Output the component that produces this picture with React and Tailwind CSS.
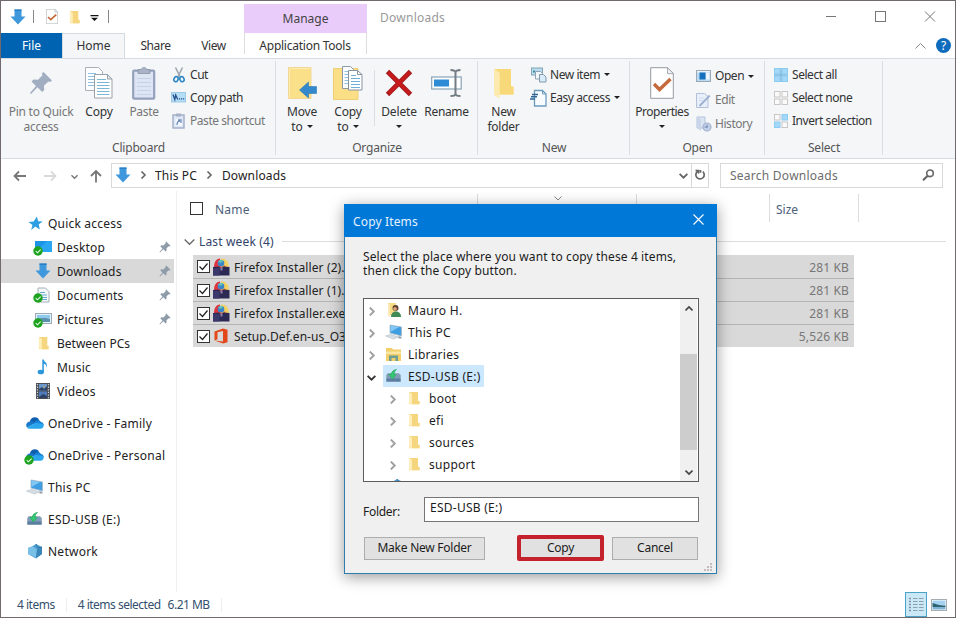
import clsx from "clsx";

/* ---------- ICONS ---------- */

const DownArrow = ({ size = 16 }) => (
  <svg width={size} height={size} viewBox="0 0 16 16">
    <path d="M4.500.500h7V7.500h4L8 15.500.5 7.500h4z" fill="#3f97dc" />
    <path d="M4.500.500h7V2h-7z" fill="#2b7fc7" />
  </svg>
);

const Folder = ({ w = 12, h = 16 }) => (
  <svg width={w} height={h} viewBox="0 0 12 16" preserveAspectRatio="none">
    <path d="M1 1h9v10l1.500 0v4H1z" fill="#fbe296" />
    <path d="M10 1v10.500h1.500V15H4V3.500L1.500 1z" fill="#f5d67e" />
    <path d="M1 1l3 2.500v12L1 13.500z" fill="#fdeebb" />
  </svg>
);

const Pin = ({ size = 13, color = "#8e9caa" }) => (
  <svg width={size} height={size} viewBox="0 0 24 24">
    <path d="M14.500 1l8.500 8.500-2 1.500-1.500-.5-4.500 4 .2 4.500-2 2-4.700-4.700L2 23l-1-1 6-7L2.500 10.500l2-2 4.500.3 4.500-4.600-.7-1.700z" fill={color} />
  </svg>
);

const Caret = () => (
  <svg width="6" height="3" viewBox="0 0 6 3" className="inline-block">
    <path d="M0 0h6L3 3z" fill="#222" />
  </svg>
);

const Chevron = ({ dir = "right", size = 8, color = "#666", stroke = 1.400 }) => {
  const paths = {
    right: "M2.500 0.500L6 4 2.500 7.500",
    down: "M0.500 2.500L4 6 7.500 2.500",
    up: "M0.500 5.500L4 2 7.500 5.500",
  };
  return (
    <svg width={size} height={size} viewBox="0 0 8 8" fill="none" stroke={color} strokeWidth={stroke}>
      <path d={paths[dir]} />
    </svg>
  );
};

const NavArrow = ({ dir, color }) => {
  const paths = {
    left: "M6 1.500L1.500 6 6 10.500M1.500 6H13",
    right: "M8 1.500l4.500 4.500L8 10.500M12.500 6H1",
    up: "M2 6l5-5 5 5M7 1v11.500",
  };
  return (
    <svg width="14" height="13" viewBox="0 0 14 13" fill="none" stroke={color} strokeWidth="1.800">
      <path d={paths[dir]} />
    </svg>
  );
};

const CopyIcon = () => (
  <svg width="28" height="32" viewBox="0 0 28 32">
    <path d="M.5.500h13l4 4v19h-17z" fill="#fbfdfe" stroke="#a9b0b6" />
    <path d="M3 6.500h8M3 9.500h10M3 12.500h8M3 15.500h8M3 18.500h8" stroke="#8fc0dd" />
    <path d="M9.500 7.500h13l4.500 4.500v19H9.500z" fill="#fff" stroke="#9aa2a9" />
    <path d="M22.500 7.500V12H27z" fill="#e3e9ee" stroke="#9aa2a9" />
    <path d="M12 12.500h9M12 15.500h12.500M12 18.500h12.500M12 21.500h12.500M12 24.500h12.500M12 27.500h12.500" stroke="#7eb6d8" />
  </svg>
);

const PasteIcon = () => (
  <svg width="24" height="33" viewBox="0 0 24 33">
    <rect x="1.200" y="3.700" width="21" height="28" rx="1" fill="#dde5f4" stroke="#94a1bd" strokeWidth="2.200" />
    <path d="M6 2.500h3.500C10 .800 11 .500 12 .500s2 .3 2.500 2H18v4H6z" fill="#aab4c6" stroke="#8793a8" strokeWidth=".8" />
    <path d="M5 11.500h14M5 15.500h14M5 19.500h14M5 23.500h14M5 27.500h14" stroke="#c6d2ea" />
  </svg>
);

const CutIcon = () => (
  <svg width="14" height="16" viewBox="0 0 14 16" fill="none">
    <path d="M3.500 .5l4.700 9.500M10.500 .5L5.800 10" stroke="#9aa4ad" strokeWidth="1.500" />
    <ellipse cx="4" cy="12.200" rx="2" ry="2.600" stroke="#2f88c4" strokeWidth="1.600" transform="rotate(25 4 12.200)" />
    <ellipse cx="10" cy="12.200" rx="2" ry="2.600" stroke="#2f88c4" strokeWidth="1.600" transform="rotate(-25 10 12.200)" />
  </svg>
);

const CopyPathIcon = () => (
  <svg width="15" height="11" viewBox="0 0 15 11">
    <rect x=".5" y=".5" width="14" height="9.500" fill="#b5ddf6" stroke="#9cc9e6" />
    <path d="M2 2.500l1.800 5 .9-4.500L6.800 7.500" stroke="#24528c" strokeWidth="1.300" fill="none" />
    <path d="M8 6.800h1.200M10 6.800h1.200M12 6.800h1.200" stroke="#24528c" strokeWidth="1.300" />
  </svg>
);

const PasteShortcutIcon = () => (
  <svg width="13" height="16" viewBox="0 0 13 16">
    <rect x="1" y="2" width="11" height="13" fill="#dfe7f5" stroke="#a0adc8" strokeWidth="1.400" />
    <rect x="4" y=".5" width="5" height="3" fill="#a5b1c6" />
    <rect x="3.500" y="6" width="6.500" height="6.500" fill="#f6f9fd" />
    <path d="M5 12c0-3 1-4 3-4M6 6.800h3V10" stroke="#6f8bbb" strokeWidth="1.300" fill="none" />
  </svg>
);

const MoveToIcon = () => (
  <svg width="29" height="32" viewBox="0 0 29 32">
    <path d="M.5.500h22.500v31H.5z" fill="#fbe08a" />
    <path d="M.5.500h22.500v31H.5z" fill="none" stroke="#f2d894" />
    <path d="M2 1.500h20M1.500 2v29" stroke="#fdebb2" />
    <path d="M28.500 19.500v7h-8V31l-9-8 9-8v4.500z" fill="#3489cd" stroke="#2a77b6" strokeWidth=".6" />
  </svg>
);

const CopyToIcon = () => (
  <svg width="30" height="34" viewBox="0 0 30 34">
    <path d="M.5 2.500H25v31H.5z" fill="#fbdf86" stroke="#f0cf74" />
    <path d="M9.500.500h8l3 3v19h-11z" fill="#fbfdfe" stroke="#8d99a6" />
    <path d="M11.500 5.500h6M11.500 8.500h4M11.500 11.500h4M11.500 14.500h4M11.500 17.500h4" stroke="#8ec0e0" />
    <path d="M15.500 4.500h9l4.500 4v15.500H15.500z" fill="#fff" stroke="#8694a2" />
    <path d="M24.500 4.500v4H29" fill="none" stroke="#8694a2" />
    <path d="M18 9.500h5M18 12.500h9M18 15.500h9M18 18.500h9M18 21.500h9" stroke="#6faed6" />
  </svg>
);

const DeleteIcon = () => (
  <svg width="28" height="28" viewBox="0 0 28 28">
    <path d="M2.500 2.500l23 23M25.500 2.500l-23 23" stroke="#a31b1d" strokeWidth="4.800" />
    <path d="M3.500 3.500l21 21M24.500 3.500l-21 21" stroke="#c81a1a" strokeWidth="3" />
  </svg>
);

const RenameIcon = () => (
  <svg width="32" height="28" viewBox="0 0 32 28" fill="none">
    <rect x=".700" y="8" width="29.500" height="12" fill="#fdfeff" stroke="#8aa3b5" strokeWidth="1.200" />
    <rect x="3" y="10.500" width="15" height="7" fill="#2e8bd4" />
    <path d="M24.500 2.500v23M19.500 1c3 0 5 .5 5 2.500 0-2 2-2.500 5-2.500M19.500 27c3 0 5-.5 5-2.500 0 2 2 2.500 5 2.500" stroke="#737b83" strokeWidth="2" />
  </svg>
);

const NewFolderIcon = () => (
  <svg width="21" height="31" viewBox="0 0 21 31">
    <path d="M1 1h17v17l2.500 1v7.500H1z" fill="#fbe08a" />
    <path d="M18 1v17l2.500 1v7.500H7V5.500L3 1z" fill="#f7d97a" />
    <path d="M1 1l5.500 4v25.500L1 27z" fill="#fdeab0" />
  </svg>
);

const NewItemIcon = () => (
  <svg width="16" height="16" viewBox="0 0 16 16">
    <rect x=".5" y="1" width="11" height="7" fill="#b8dcee" stroke="#84a4b7" />
    <path d="M2 3.500h2v2H2z" fill="#3f8f9f" />
    <path d="M4.500 4.500h5l2 2v5.500h-7z" fill="#f3f8fb" stroke="#8fa3b2" />
    <path d="M8.500 7.500h4l2.500 2.500v5H8.500z" fill="#d9ecf7" stroke="#8499aa" />
  </svg>
);

const EasyAccessIcon = () => (
  <svg width="17" height="18" viewBox="0 0 17 18">
    <path d="M4.500 1.500h8l3.500 3.500v12H4.500z" fill="#f9fcfe" stroke="#6b9cbd" strokeWidth="1.300" />
    <path d="M12.500 1.500V5H16" fill="none" stroke="#6b9cbd" />
    <path d="M2 5.500h6M1 7.700h6M0 10h5" stroke="#2f6699" strokeWidth="1.400" />
  </svg>
);

const PropertiesIcon = ({ w = 24, h = 32 }) => (
  <svg width={w} height={h} viewBox="0 0 24 32" preserveAspectRatio="none">
    <path d="M.7.700h17l5.600 5.800v24.800H.7z" fill="#fff" stroke="#949ba1" strokeWidth="1" />
    <path d="M17.500.700v6h6z" fill="#eef1f3" stroke="#949ba1" strokeWidth=".8" />
    <path d="M4 17l5.500 5.500L20.500 12" stroke="#c46a3c" strokeWidth="3.400" fill="none" />
  </svg>
);

const OpenIcon = () => (
  <svg width="15" height="12" viewBox="0 0 15 12">
    <rect x=".5" y=".5" width="14" height="11" fill="#b9daf0" stroke="#9aa9b5" />
    <path d="M1 1h13v1.500H1z" fill="#eef4f8" />
    <rect x="3.500" y="2.500" width="6" height="7" fill="#1570be" />
    <rect x="10" y="3" width="3.500" height="6.500" fill="#eff7fc" />
  </svg>
);

const EditIcon = () => (
  <svg width="15" height="15" viewBox="0 0 15 15">
    <path d="M.5.500h8l3.500 3V14.500H.5z" fill="#e9effa" stroke="#b2c0d8" />
    <path d="M13.800 2.500L5 11.500l-1.500 1.500" stroke="#9cb0d0" strokeWidth="1.800" fill="none" />
    <path d="M3 5h5M3 7.500h4" stroke="#d0dbec" />
  </svg>
);

const HistoryIcon = () => (
  <svg width="16" height="16" viewBox="0 0 16 16">
    <path d="M1 1h8v11H1z" fill="#dbe4f3" stroke="#b4c2da" />
    <path d="M1 1l4 2.500V15l-4-3z" fill="#c9d6ea" />
    <circle cx="11" cy="11" r="4" fill="#c3cfe6" stroke="#a5b5d1" strokeWidth="1.200" />
    <path d="M8.500 11h3.500M11 8.500v3" stroke="#7389b5" />
  </svg>
);

const SelectIcon = ({ filled }) => (
  <svg width="14" height="14" viewBox="0 0 14 14">
    {[[0, 0], [7.5, 0], [0, 7.5], [7.5, 7.5]].map(([x, y], i) => (
      <rect
        key={i}
        x={x + 0.5}
        y={y + 0.5}
        width="5.500"
        height="5.500"
        fill={filled[i] ? "#a5d8f8" : "#fafafa"}
        stroke={filled[i] ? "#8accf2" : "#c9c6c5"}
      />
    ))}
    {filled.every(Boolean) && <path d="M7 0v14M0 7h14" stroke="#63abd9" />}
  </svg>
);

const Check = () => (
  <svg viewBox="0 0 17 17" className="absolute -left-px top-[6px] h-[10px] w-[10px]">
    <circle cx="8.500" cy="8.500" r="8" fill="#1da31f" />
    <path d="M4.500 8.500l3 3 5.500-5.500" stroke="#eaffea" strokeWidth="1.800" fill="none" />
  </svg>
);

const DesktopIcon = () => (
  <svg width="17" height="14" viewBox="0 0 17 14">
    <rect x="0" y="1" width="17" height="11" fill="#1b94e6" />
    <path d="M0 12L12 1h5v11z" fill="#2ba6f2" />
  </svg>
);

const DocumentsIcon = () => (
  <svg width="16" height="16" viewBox="0 0 16 16">
    <path d="M3 1h7.500l3.500 3.500V15H3z" fill="#f4f8fb" stroke="#a4b0b9" />
    <path d="M5 5.500h5M5 8h7M5 10.500h7M5 12.500h7" stroke="#6aaad2" />
  </svg>
);

const PicturesIcon = () => (
  <svg width="17" height="14" viewBox="0 0 17 14">
    <rect x=".5" y="1.500" width="16" height="10" fill="#e7f2f9" stroke="#9babb6" />
    <path d="M2 3h13v3.500H2z" fill="#8fcaee" />
    <path d="M2 6c4 1 8-1 13 1v3H2z" fill="#5b91aa" />
  </svg>
);

const MusicIcon = () => (
  <svg width="14" height="16" viewBox="0 0 14 16">
    <ellipse cx="4.800" cy="13" rx="3.200" ry="2.300" fill="#2b97da" />
    <path d="M6.300 13V.5h1.500c.3 2.500 4.400 3.500 3 8.500 0-2.500-1.200-3.800-3-4.200V13z" fill="#2b97da" />
  </svg>
);

const VideosIcon = () => (
  <svg width="14" height="16" viewBox="0 0 14 16">
    <rect width="14" height="16" fill="#4d4f58" />
    <path d="M1.500 1v15M12.500 1v15" stroke="#cfd3d8" strokeWidth="1.200" strokeDasharray="1.300 1.300" />
    <rect x="3" y="1" width="8" height="6.500" fill="#6b97cf" />
    <rect x="3" y="8.500" width="8" height="6.500" fill="#4f7bbb" />
    <path d="M3 6l3-2 2 2 3-3v4.500H3zM3 14l4-3 4 2v2H3z" fill="#2f4266" />
    <path d="M7 2.500l2 1-1 1.500z" fill="#d6a24a" />
  </svg>
);

const CloudIcon = () => (
  <svg width="18" height="12" viewBox="0 0 18 12">
    <path d="M3.800 5C4.200 1.800 6.500.300 8.800.300c2.200 0 3.700 1.200 4.400 3L9 8z" fill="#0f5fb0" />
    <path d="M13 3.300c-2-.3-3.400.5-4.300 2L14 9.500l3.700-1.500C17.500 6 16.300 5 14.900 5c-.3-.8-1-1.500-1.900-1.700z" fill="#1683d6" />
    <path d="M4 4.500C1.800 4.600.2 6.200.2 8.200c0 .9.300 1.600.8 2.200L9.500 6C8 5 6 4.300 4 4.500z" fill="#1a78ca" />
    <path d="M1 10.400c.7 1 1.800 1.400 3 1.400h10.500c1.800 0 3.300-1.500 3.200-3.500 0-.5-.2-1-.4-1.300L9.500 5.800z" fill="#2ba6ec" />
  </svg>
);

const PcIcon = () => (
  <svg width="17" height="16" viewBox="0 0 17 16">
    <path d="M5 1l11.500 2v9L5 9z" fill="#3f9fe2" stroke="#a3b6c4" strokeWidth=".8" />
    <path d="M5.500 1.500l8.500 1.500L5.500 8z" fill="#83c8f4" />
    <path d="M.5 12l5-1.500 8 2.500-5 2z" fill="#d7dfe5" stroke="#b3bec6" strokeWidth=".6" />
    <path d="M13.500 12l3 1v1.500h-3z" fill="#91a0ab" />
  </svg>
);

const UsbIcon = () => (
  <svg width="15" height="14" viewBox="0 0 15 14">
    <path d="M1.500 4.500h11.500l1.500 1.500v6.500H.5v-6z" fill="#7f9dba" stroke="#93a5b4" strokeWidth=".6" />
    <path d="M.5 9.500h14v3H.5z" fill="#5a7fa0" />
    <path d="M10.500.500C7 1 5.500 3 5.300 5.300H2.800L6.500 10 10 5.500 8 5.300C8 3.500 8.800 1.800 10.500.5z" fill="#35c873" stroke="#27ad5f" strokeWidth=".8" />
  </svg>
);

const NetworkIcon = () => (
  <svg width="16" height="16" viewBox="0 0 16 16">
    <path d="M1 5l4-1.500L9 1l6 3v7l-6 4.500L1 11z" fill="#4d9ed0" />
    <path d="M1 5l5-1.500 4 3-1 8L1 11z" fill="#79c0e8" />
    <path d="M10 6.500L15 4v7l-6 4z" fill="#3a86b9" />
    <path d="M9 1l2 4 4-1" stroke="#2d6b96" strokeWidth=".8" fill="none" />
  </svg>
);

const StarIcon = () => (
  <svg width="15" height="15" viewBox="0 0 16 16">
    <path d="M9.500.500l1.300 5 5 .300-4.300 3 1 5.500-4.700-3-4.500 3.500 1.500-5.300L.5 6.500l5.500-.7z" fill="#2b9fe2" />
  </svg>
);

const FirefoxBoxIcon = () => (
  <svg width="17" height="18" viewBox="0 0 17 18">
    <path d="M1 9C1 4 3 1 7 .500L8 9z" fill="#e0343f" />
    <path d="M8 .500c5-.5 7.500 2.500 8 8.500H8z" fill="#f2d264" />
    <circle cx="8" cy="5.200" r="3.300" fill="#3b86c8" />
    <path d="M5 4c1-2.500 4-3 5.500-1.500L8 5z" fill="#63c2b8" />
    <path d="M6 8c2 1.500 5 1 6-1l1 3H6z" fill="#d6553f" />
    <path d="M0 9l6-.5 2 2 2-2 6.500.5v8.500H0z" fill="#2c2a55" />
    <path d="M0 10h6.500v7.500H0z" fill="#3b396b" />
    <path d="M7.500 9.500h2v3h-2z" fill="#8d7bab" />
  </svg>
);

const OfficeIcon = () => (
  <svg width="14" height="16" viewBox="0 0 14 16">
    <path d="M.5 3.500L9 .500l4.500 1.300v12.400L9 15.500.5 12.500l8.500 1V3L3.500 4.300v7L.5 12.500z" fill="#e2481a" />
  </svg>
);

const UserFolderIcon = () => (
  <svg width="16" height="16" viewBox="0 0 16 16">
    <path d="M2 1h8v12H2z" fill="#f7dc86" />
    <path d="M2 1l2 1.500V15l-2-1.500z" fill="#fbeab4" />
    <circle cx="9.500" cy="6" r="3" fill="#5a4030" />
    <circle cx="9" cy="6.800" r="1.900" fill="#d9a577" />
    <path d="M5 15c0-4 2.500-5.500 5-5.500s5 1.500 5 5.500z" fill="#3f8a55" />
  </svg>
);

const LibrariesIcon = () => (
  <svg width="17" height="15" viewBox="0 0 17 15">
    <path d="M1 1h6l1 1.500h8V14H1z" fill="#f2cf69" />
    <path d="M1 4.500h15V7H1z" fill="#fae6a4" />
    <path d="M4 14V8.500h9V14h-2.500v-3h-4v3z" fill="#6f9f93" />
  </svg>
);

const SearchIcon = () => (
  <svg width="13" height="12" viewBox="0 0 13 12" fill="none" stroke="#666">
    <circle cx="8" cy="4.300" r="3.300" strokeWidth="1.600" />
    <path d="M5.700 6.700L1 11.300" strokeWidth="2.100" />
  </svg>
);

const RefreshIcon = () => (
  <svg width="12" height="12" viewBox="0 0 12 12" fill="none" stroke="#666" strokeWidth="1.700">
    <path d="M8.800 2.600A4.200 4.200 0 1 1 3.500 2.400M6.500 3.800V1M1.500 1.500h3v3" />
  </svg>
);

/* ---------- RIBBON ---------- */

const BigButton = ({ icon, label, second, caret, disabled, className }) => (
  <div className={clsx("flex shrink-0 flex-col items-center pt-[3px] leading-[15px]", disabled ? "text-[#777]" : "text-[#333]", className)}>
    <div className="flex h-[42px] items-center justify-center">{icon}</div>
    <div className="whitespace-nowrap">{label}</div>
    <div className="flex h-[15px] items-center gap-1 whitespace-nowrap">
      {second}
      {caret && <Caret />}
    </div>
  </div>
);

const SmallButton = ({ icon, label, caret, disabled }) => (
  <div className={clsx("flex flex-1 items-center whitespace-nowrap", disabled ? "text-[#777]" : "text-[#333]")}>
    <div className="mr-[3px] flex w-[17px] justify-center">{icon}</div>
    {label}
    {caret && <span className="ml-[4px] flex"><Caret /></span>}
  </div>
);

const Group = ({ label, className, children }) => (
  <div className={clsx("relative flex shrink-0 flex-col", className)}>
    <div className="flex h-[80px]">{children}</div>
    <div className="text-center leading-[18px] tracking-[-0.2px] text-[#555]">{label}</div>
    <div className="absolute right-0 top-[2px] h-[94px] w-px bg-[#dcdee1]" />
  </div>
);

const Ribbon = () => (
  <div className="flex h-[101px] border-y border-[#d4dce2] bg-[#f4f6f8] tracking-[-0.45px]">
    <Group label="Clipboard" className="w-[275px]">
      <BigButton className="w-[80px] tracking-[-0.25px]" disabled icon={<Pin size={24} color="#a1adc0" />} label="Pin to Quick" second="access" />
      <BigButton className="w-[36px] tracking-[-0.15px]" icon={<CopyIcon />} label="Copy" />
      <BigButton className="w-[54px] tracking-[-0.35px]" disabled icon={<PasteIcon />} label="Paste" />
      <div className="-ml-px mt-[4px] flex h-[69px] flex-col">
        <SmallButton icon={<CutIcon />} label="Cut" />
        <SmallButton icon={<CopyPathIcon />} label="Copy path" />
        <SmallButton disabled icon={<PasteShortcutIcon />} label="Paste shortcut" />
      </div>
    </Group>
    <Group label="Organize" className="w-[202px]">
      <BigButton className="w-[52px] tracking-[-0.15px]" icon={<MoveToIcon />} label="Move" second="to" caret />
      <BigButton className="w-[40px] tracking-[-0.15px]" icon={<CopyToIcon />} label="Copy" second="to" caret />
      <div className="ml-[6px] mt-[11px] h-[56px] w-px bg-[#dcdee1]" />
      <BigButton className="w-[48px] tracking-[-0.15px]" icon={<DeleteIcon />} label="Delete" caret />
      <BigButton className="w-[47px] tracking-[-0.35px]" icon={<RenameIcon />} label="Rename" />
    </Group>
    <Group label="New" className="w-[152px]">
      <BigButton className="w-[51px] tracking-[-0.25px]" icon={<NewFolderIcon />} label="New" second="folder" />
      <div className="mt-[4px] flex h-[46px] flex-col pl-px">
        <SmallButton icon={<NewItemIcon />} label="New item" caret />
        <SmallButton icon={<EasyAccessIcon />} label="Easy access" caret />
      </div>
    </Group>
    <Group label="Open" className="w-[135px]">
      <BigButton className="w-[64px] tracking-[-0.5px]" icon={<PropertiesIcon />} label="Properties" caret />
      <div className="mt-[5px] flex h-[72px] flex-col pl-px">
        <SmallButton icon={<OpenIcon />} label="Open" caret />
        <SmallButton disabled icon={<EditIcon />} label="Edit" />
        <SmallButton disabled icon={<HistoryIcon />} label="History" />
      </div>
    </Group>
    <Group label="Select" className="w-[118px]">
      <div className="ml-[6px] mt-[4px] flex h-[69px] flex-col pl-px">
        <SmallButton icon={<SelectIcon filled={[1, 1, 1, 1]} />} label="Select all" />
        <SmallButton icon={<SelectIcon filled={[0, 0, 0, 0]} />} label="Select none" />
        <SmallButton icon={<SelectIcon filled={[0, 1, 1, 0]} />} label="Invert selection" />
      </div>
    </Group>
  </div>
);

/* ---------- TITLE + TABS ---------- */

const Header = () => (
  <div className="flex h-[57px] shrink-0">
    <div className="flex w-[243px] flex-col">
      <div className="flex h-[31px] items-center pl-[9px]">
        <DownArrow size={16} />
        <div className="ml-[7px] h-[13px] w-px bg-[#888]" />
        <div className="ml-[12px]"><PropertiesIcon w={12} h={15} /></div>
        <div className="ml-[11px]"><Folder w={11} h={14} /></div>
        <svg width="9" height="6" viewBox="0 0 9 6" className="ml-[10px] mt-[3px]">
          <path d="M.5 0h8v1.300h-8zM1 2.800h7L4.500 6z" fill="#111" />
        </svg>
        <div className="ml-[9px] h-[13px] w-px bg-[#888]" />
      </div>
      <div className="mt-px flex h-[25px] items-center text-[#333]">
        <div className="flex h-full w-[61px] items-center justify-center bg-[#0063b1] text-white">File</div>
        <div className="-mb-px flex h-[26px] w-[63px] items-center justify-center border border-b-0 border-[#d4dce2] bg-[#f4f6f8] pb-px">Home</div>
        <div className="w-[61px] pt-px text-center tracking-[-0.4px]">Share</div>
        <div className="w-[55px] pt-px text-center tracking-[-0.4px]">View</div>
      </div>
    </div>
    <div className="flex w-[123px] flex-col pt-[3px]">
      <div className="flex h-[29px] items-center justify-center bg-[#e9ccfa] text-[#444]">Manage</div>
      <div className="flex h-[21px] items-center justify-center whitespace-nowrap border-x border-[#ddd] pr-px pt-[5px] tracking-[-0.25px] text-[#333]">
        Application Tools
      </div>
    </div>
    <div className="pl-[13px] pt-[8px] leading-[18px] tracking-[0.25px] text-[#999]">Downloads</div>
    <div className="ml-auto flex w-[140px] flex-col">
      <div className="flex h-[31px] items-center">
        <svg width="115" height="11" viewBox="0 0 115 11" className="ml-[11px]" fill="none" stroke="#777">
          <path d="M0 5.500h10" />
          <rect x="49.500" y=".5" width="10" height="10" />
          <path d="M99 .5l10 10M109 .5l-10 10" />
        </svg>
      </div>
      <div className="mt-px flex h-[25px] items-center justify-end gap-[10px] pr-[4px]">
        <svg width="11" height="6" viewBox="0 0 11 6" fill="none" stroke="#888"><path d="M.5 5.500l5-5 5 5" /></svg>
        <div className="flex h-[15px] w-[15px] items-center justify-center rounded-full bg-[#0f6cbd] text-[12px] text-white">?</div>
      </div>
    </div>
  </div>
);

const AddressBar = () => (
  <div className="flex h-[32px] shrink-0 items-center tracking-[0.15px] text-[#222]">
    <div className="flex w-[110px] items-center pl-[12px] pt-[2px]">
      <NavArrow dir="left" color="#777" />
      <div className="ml-[16px]"><NavArrow dir="right" color="#d9d9d9" /></div>
      <div className="ml-[14px]"><Chevron dir="down" size={7} color="#777" stroke={1.700} /></div>
      <div className="ml-[11px]"><NavArrow dir="up" color="#777" /></div>
    </div>
    <div className="flex h-[25px] w-[598px] items-center border border-[#d9d9d9] pl-[3px]">
      <DownArrow size={16} />
      <div className="ml-[8px]"><Chevron size={8} stroke={1.600} /></div>
      <span className="ml-[8px] pt-px">This PC</span>
      <div className="ml-[8px]"><Chevron size={8} stroke={1.600} /></div>
      <span className="ml-[9px] pt-px">Downloads</span>
      <div className="ml-auto flex h-full items-center">
        <Chevron dir="down" size={9} stroke={1.700} />
        <div className="ml-[3px] flex h-full w-[17px] items-center justify-center border-l border-[#d9d9d9]"><RefreshIcon /></div>
      </div>
    </div>
    <div className="ml-[11px] flex h-[25px] w-[223px] items-center justify-between border border-[#d9d9d9] pl-[9px] pr-[7px] text-[#6d6d6d]">
      <span className="pt-[2px] tracking-[0.25px]">Search Downloads</span>
      <SearchIcon />
    </div>
  </div>
);

/* ---------- SIDEBAR ---------- */

const quickItems = [
  { label: "Desktop", icon: <DesktopIcon />, synced: true, pinned: true },
  { label: "Downloads", icon: <DownArrow />, pinned: true, active: true },
  { label: "Documents", icon: <DocumentsIcon />, synced: true, pinned: true },
  { label: "Pictures", icon: <PicturesIcon />, synced: true, pinned: true },
  { label: "Between PCs", icon: <Folder w={11} h={14} /> },
  { label: "Music", icon: <MusicIcon /> },
  { label: "Videos", icon: <VideosIcon /> },
];

const places = [
  { label: "OneDrive - Family", icon: <CloudIcon /> },
  { label: "OneDrive - Personal", icon: <CloudIcon />, synced: true },
  { label: "This PC", icon: <PcIcon /> },
  { label: "ESD-USB (E:)", icon: <UsbIcon /> },
  { label: "Network", icon: <NetworkIcon /> },
];

const Sidebar = () => (
  <div className="w-[176px] shrink-0 border-r border-[#f0f0f0] pt-[20px] tracking-[0.2px] text-[#222]">
    <div className="flex h-[24px] items-center pl-[27px]">
      <StarIcon />
      <span className="ml-[5px] pt-[2px]">Quick access</span>
    </div>
    {quickItems.map((item) => (
      <div key={item.label} className={clsx("mr-[2px] flex h-[24px] items-center pl-[33px] pr-[3px]", item.active && "bg-[#d9d9d9]")}>
        <div className="relative flex w-[18px] justify-center">
          {item.icon}
          {item.synced && <Check />}
        </div>
        <span className={clsx("ml-[5px] pt-[2px]", item.label === "Between PCs" && "tracking-[0px]")}>{item.label}</span>
        {item.pinned && <div className="ml-auto"><Pin size={12} /></div>}
      </div>
    ))}
    <div className="mt-[4px]">
      {places.map((item) => (
        <div key={item.label} className="flex h-[32px] items-center whitespace-nowrap pl-[24px]">
          <div className="relative flex w-[19px] justify-center">
            {item.icon}
            {item.synced && <Check />}
          </div>
          <span className="ml-[4px] pt-[2px] tracking-[0.25px]">{item.label}</span>
        </div>
      ))}
    </div>
  </div>
);

/* ---------- FILE LIST ---------- */

const files = [
  { name: "Firefox Installer (2).exe", size: "281 KB", icon: <FirefoxBoxIcon /> },
  { name: "Firefox Installer (1).exe", size: "281 KB", icon: <FirefoxBoxIcon /> },
  { name: "Firefox Installer.exe", size: "281 KB", icon: <FirefoxBoxIcon /> },
  { name: "Setup.Def.en-us_O365", size: "5,526 KB", icon: <OfficeIcon /> },
];

const FileList = () => (
  <div className="flex-1 pt-[3px]">
    <div className="flex h-[28px] items-center text-[#4c607a]">
      <div className="ml-[13px] h-[13px] w-[13px] border border-[#333]" />
      <span className="ml-[12px] pt-[3px] tracking-[0.2px]">Name</span>
      <div className="ml-auto flex h-full w-[382px]">
        <div className="w-[159px] self-stretch border-l border-[#ddd] pl-[76px]"><Chevron dir="down" size={8} color="#888" stroke={1} /></div>
        <div className="w-[133px] border-l border-[#ddd]" />
        <div className="flex w-[90px] items-center border-x border-[#ddd] pl-[6px] pt-[3px]">Size</div>
      </div>
      <div className="w-[96px]" />
    </div>
    <div className="flex h-[33px] items-center pl-[7px] pr-[9px] pt-[5px] text-[#33446b]">
      <Chevron dir="down" size={11} stroke={0.9} />
      <span className="ml-[4px] pt-px tracking-[0.15px]">Last week (4)</span>
      <div className="ml-[8px] h-px flex-1 bg-[#ddd]" />
    </div>
    <div className="ml-[16px] w-[661px]">
      {files.map((f, i) => (
        <div key={f.name} className={clsx("flex h-[23px] items-center bg-[#d9d9d9] pl-[4px] pr-[5px]", i > 0 && "border-t border-[#b4b4b4]")}>
          <div className="h-[13px] w-[13px] border border-[#333] bg-white">
            <svg width="11" height="11" viewBox="0 0 11 11" fill="none" stroke="#222" strokeWidth="1.200"><path d="M1.500 5.500l3 3 5-6" /></svg>
          </div>
          <div className="ml-[2px] flex w-[18px] justify-center">{f.icon}</div>
          <span className={clsx("ml-[4px] text-[#222]", i === 0 ? "pt-[2px]" : "pt-px", i < 2 ? "tracking-[0.12px]" : i === 2 ? "tracking-[0.15px]" : "tracking-[0.05px]")}>{f.name}</span>
          <span className={clsx("ml-auto tracking-[0.15px] text-[#777]", i === 0 ? "pt-[2px]" : "pt-px")}>{f.size}</span>
        </div>
      ))}
    </div>
  </div>
);

/* ---------- DIALOG ---------- */

const tree = [
  { label: "Mauro H.", icon: <UserFolderIcon /> },
  { label: "This PC", icon: <PcIcon /> },
  { label: "Libraries", icon: <LibrariesIcon /> },
  { label: "ESD-USB (E:)", icon: <UsbIcon />, open: true },
  { label: "boot", icon: <Folder w={12} h={14} />, child: true },
  { label: "efi", icon: <Folder w={12} h={14} />, child: true },
  { label: "sources", icon: <Folder w={12} h={14} />, child: true },
  { label: "support", icon: <Folder w={12} h={14} />, child: true },
];

const CopyDialog = () => (
  <div className="absolute left-[343px] top-[203px] flex h-[370px] w-[373px] flex-col border border-[#2f7fae] bg-[#f0f0f0] text-[#1c1c1c] shadow-[0_3px_14px_rgba(0,0,0,0.4)]">
    <div className="-mx-px -mt-px flex h-[33px] shrink-0 items-center justify-between bg-[#0078d7] pl-[9px] pr-[13px] pt-[2px] text-[#e3f2ff]">
      <span className="tracking-[0.15px]">Copy Items</span>
      <svg width="11" height="11" viewBox="0 0 11 11" stroke="#fff" strokeWidth="1.100" className="-mt-[4px]"><path d="M.5.500l10 10M10.500.500l-10 10" /></svg>
    </div>
    <div className="ml-[18px] mt-[13px] h-[48px] whitespace-nowrap leading-[14px] tracking-[0.12px]">
      Select the place where you want to copy these 4 items,
      <br />
      then click the Copy button.
    </div>
    <div className="ml-[18px] flex h-[184px] w-[336px] shrink-0 border border-[#5c5c5c] bg-white">
      <div className="h-full flex-1 overflow-hidden">
        {tree.map((node) => (
          <div key={node.label} className={clsx("flex h-[22px] items-center", node.child ? "pl-[24px]" : "pl-[3px]")}>
            <div className="pt-[2px]">
              <Chevron dir={node.open ? "down" : "right"} size={9} color={node.open ? "#333" : "#a0a0a0"} stroke={1.700} />
            </div>
            <div className={clsx("ml-[7px] flex h-[22px] items-center pr-[3px]", node.open && "bg-[#cce8ff]")}>
              <div className={clsx("flex w-[21px] justify-center", node.child && "pr-[2px]")}>{node.icon}</div>
              <span className="ml-[4px] pt-px tracking-[0.28px]">{node.label}</span>
            </div>
          </div>
        ))}
        <div className="h-[22px] pl-[24px] pt-[3px]"><NetworkIcon /></div>
      </div>
      <div className="mr-px flex w-[17px] flex-col items-center justify-between bg-[#f0f0f0]">
        <div className="pt-[6px]"><Chevron dir="up" size={8} color="#444" stroke={1.700} /></div>
        <div className="mt-auto h-[96px] w-full bg-[#cdcdcd]" />
        <div className="flex h-[31px] items-end pb-[5px]"><Chevron dir="down" size={8} color="#444" stroke={1.700} /></div>
      </div>
    </div>
    <div className="ml-[18px] mt-[15px] flex h-[25px] w-[336px] shrink-0 items-center">
      <span className="w-[61px] pt-[4px] tracking-[-0.3px]">Folder:</span>
      <div className="h-full flex-1 border border-[#767676] bg-white pl-[5px] leading-[20px] tracking-[0.25px]">ESD-USB (E:)</div>
    </div>
    <div className="ml-[19px] mt-[13px] flex shrink-0 items-center tracking-[-0.25px]">
      <div className="flex h-[23px] w-[121px] items-center justify-center border border-[#adadad] bg-[#e1e1e1]">Make New Folder</div>
      <div className="ml-[32px] flex h-[26px] w-[87px] items-center justify-center rounded-[2px] border-4 border-[#c4222c] bg-[#e1e1e1]">Copy</div>
      <div className="ml-[8px] flex h-[23px] w-[86px] items-center justify-center border border-[#adadad] bg-[#e1e1e1]">Cancel</div>
    </div>
    <svg width="9" height="9" viewBox="0 0 9 9" fill="#c3bcbc" className="absolute bottom-[1px] right-[3px]">
      <path d="M6 0h2v2H6zM3 3h2v2H3zM6 3h2v2H6zM0 6h2v2H0zM3 6h2v2H3zM6 6h2v2H6z" />
    </svg>
  </div>
);

const StatusBar = () => (
  <div className="flex h-[25px] shrink-0 items-center pl-[16px] tracking-[-0.5px] text-[#34506e]">
    <span>4 items</span>
    <div className="ml-[11px] h-[14px] w-px bg-[#eee]" />
    <span className="ml-[11px]">4 items selected</span>
    <span className="ml-[7px]">6.21 MB</span>
    <div className="ml-[11px] h-[14px] w-px bg-[#eee]" />
    <div className="ml-auto flex items-center gap-[4px] pr-[8px]">
      <svg width="22" height="25" viewBox="0 0 22 25">
        <rect x=".5" y=".5" width="21" height="24" fill="#cbe8f6" stroke="#4ba3c7" />
        <path d="M4 6.500h2M4 9.500h2M4 12.500h2M4 15.500h2M4 18.500h2" stroke="#7d92a2" strokeWidth="1.500" />
        <path d="M8 6.500h4.500M14 6.500h4.500M8 9.500h4.500M14 9.500h4.500M8 12.500h4.500M14 12.500h4.500M8 15.500h4.500M14 15.500h4.500M8 18.500h4.500M14 18.500h4.500" stroke="#8aa0ae" />
      </svg>
      <svg width="16" height="12" viewBox="0 0 16 12">
        <rect x=".5" y=".5" width="15" height="11" fill="#fff" stroke="#a5adb2" />
        <path d="M1.500 1.500h13v5h-13z" fill="#a5d2f0" />
        <path d="M1.500 4c4 1 6 2.500 13 2.500V8h-13z" fill="#2f6473" />
        <path d="M1.500 8h13v2.500h-13z" fill="#7fb3d6" />
      </svg>
    </div>
  </div>
);

const App = () => {
  return (
    <div className="relative flex h-[618px] w-[956px] flex-col overflow-hidden border border-[#706a70] bg-white font-['Noto_Sans','Open_Sans',sans-serif] text-[12px] leading-[16px]">
      <Header />
      <Ribbon />
      <AddressBar />
      <div className="flex min-h-0 flex-1">
        <Sidebar />
        <FileList />
      </div>
      <StatusBar />
      <CopyDialog />
    </div>
  );
};

export default App;
